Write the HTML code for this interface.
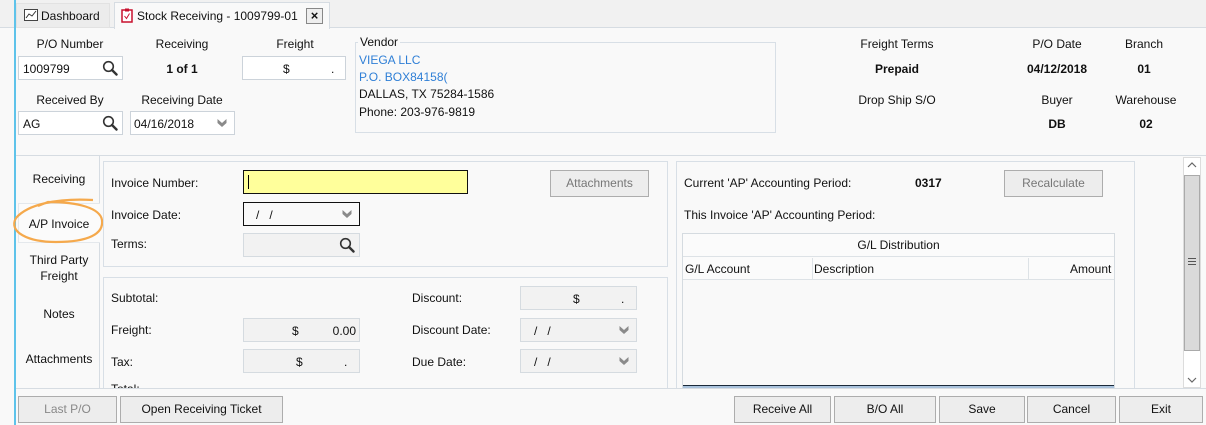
<!DOCTYPE html>
<html><head><meta charset="utf-8"><style>
*{box-sizing:border-box;margin:0;padding:0}
body{width:1206px;height:425px;overflow:hidden;background:#f9f9f9;font-family:"Liberation Sans",sans-serif;font-size:12px;color:#111;position:relative}
.a{position:absolute;white-space:nowrap}
.c{transform:translateX(-50%)}
.b{font-weight:bold}
.in{position:absolute;background:#fff;border:1px solid #ccd3da}
.gi{position:absolute;background:#f2f2f2;border:1px solid #d5dbe0}
.btn{position:absolute;background:#ededed;border:1px solid #adadad;text-align:center;line-height:25px}
.box{position:absolute;border:1px solid #d8dfe6}
.dd{position:absolute;right:7px;top:6px}
.mg{position:absolute;right:4px;top:3px}
</style></head><body>
<svg width="0" height="0" style="position:absolute"><defs>
<symbol id="mag" viewBox="0 0 16 16"><circle cx="6.5" cy="6.5" r="4.8" fill="none" stroke="#333" stroke-width="1.6"/><path d="M10 10 L14.5 14.5" stroke="#333" stroke-width="2.4" stroke-linecap="round"/></symbol>
<symbol id="chev" viewBox="0 0 10 10"><path d="M0.5 1 L5 5 L9.5 1 L9.5 5 L5 9 L0.5 5 Z" fill="#8a8a8a"/></symbol>
</defs></svg>
<div class="a" style="left:0;top:0;width:1206px;height:28px;background:#f1f1f1;border-bottom:1px solid #d6dce2"></div>
<div class="a" style="left:14px;top:0;width:2px;height:425px;background:#5ec3ea"></div>
<div class="a" style="left:16px;top:3px;width:94px;height:25px;background:#ececec;border:1px solid #e2e2e2"></div>
<svg class="a" style="left:24px;top:9px" width="14" height="12"><rect x="0.5" y="0.5" width="13" height="11" fill="#fff" stroke="#444"/><path d="M2 9 L5 5 L8 7 L12 2" stroke="#333" fill="none"/></svg>
<div class="a" style="left:41px;top:9px">Dashboard</div>
<div class="a" style="left:114px;top:2px;width:216px;height:27px;background:#f9f9f9;border:1px solid #d6dce2;border-bottom:none"></div>
<svg class="a" style="left:121px;top:8px" width="12" height="15"><rect x="1" y="2" width="10" height="12" fill="#fff" stroke="#c8102e" stroke-width="1.5"/><rect x="4" y="0.5" width="4" height="3" fill="#c8102e"/><path d="M3.5 8 L5.5 10.5 L8.5 5.5" stroke="#c8102e" fill="none"/></svg>
<div class="a" style="left:137px;top:9px">Stock Receiving - 1009799-01</div>
<div class="a" style="left:306px;top:8px;width:17px;height:16px;border:1px solid #888;background:#eee;text-align:center;font-weight:bold;line-height:14px;font-size:13px">×</div>

<div class="a c" style="left:70px;top:37px">P/O Number</div>
<div class="in" style="left:18px;top:56px;width:105px;height:24px"><span class="a" style="left:4px;top:5px">1009799</span><svg class="mg" width="16" height="16"><use href="#mag"/></svg></div>
<div class="a c" style="left:182px;top:37px">Receiving</div>
<div class="a c b" style="left:182px;top:62px">1 of 1</div>
<div class="a c" style="left:295px;top:37px">Freight</div>
<div class="in" style="left:242px;top:56px;width:104px;height:24px"><span class="a" style="left:40px;top:5px">$</span><span class="a" style="left:88px;top:5px">.</span></div>
<div class="a c" style="left:70px;top:93px">Received By</div>
<div class="in" style="left:18px;top:111px;width:105px;height:24px"><span class="a" style="left:4px;top:5px">AG</span><svg class="mg" width="16" height="16"><use href="#mag"/></svg></div>
<div class="a c" style="left:182px;top:93px">Receiving Date</div>
<div class="in" style="left:130px;top:111px;width:105px;height:24px"><span class="a" style="left:3px;top:5px">04/16/2018</span><svg class="dd" width="10" height="10"><use href="#chev"/></svg></div>

<div class="box" style="left:355px;top:42px;width:421px;height:91px"></div>
<div class="a" style="left:358px;top:35px;background:#f9f9f9;padding:0 2px">Vendor</div>
<div class="a" style="left:359px;top:53px;color:#2f7fd6">VIEGA LLC</div>
<div class="a" style="left:359px;top:70px;color:#2f7fd6">P.O. BOX84158(</div>
<div class="a" style="left:359px;top:87px">DALLAS, TX 75284-1586</div>
<div class="a" style="left:359px;top:105px">Phone: 203-976-9819</div>

<div class="a c" style="left:897px;top:37px">Freight Terms</div>
<div class="a c b" style="left:897px;top:62px">Prepaid</div>
<div class="a c" style="left:897px;top:93px">Drop Ship S/O</div>
<div class="a c" style="left:1057px;top:37px">P/O Date</div>
<div class="a c b" style="left:1057px;top:62px">04/12/2018</div>
<div class="a c" style="left:1057px;top:93px">Buyer</div>
<div class="a c b" style="left:1057px;top:117px">DB</div>
<div class="a c" style="left:1144px;top:37px">Branch</div>
<div class="a c b" style="left:1144px;top:62px">01</div>
<div class="a c" style="left:1146px;top:93px">Warehouse</div>
<div class="a c b" style="left:1146px;top:117px">02</div>

<div class="a" style="left:16px;top:155px;width:1190px;height:1px;background:#d6dce2"></div>
<div class="a" style="left:99px;top:155px;width:1px;height:233px;background:#d6dce2"></div>
<div class="a" style="left:16px;top:388px;width:1190px;height:1px;background:#d6dce2"></div>

<div class="a c" style="left:59px;top:172px">Receiving</div>
<div class="a" style="left:18px;top:203px;width:82px;height:40px;background:#fbfbfb;border:1px solid #e4e8ec;border-right:none"></div>
<div class="a c" style="left:59px;top:217px">A/P Invoice</div>
<svg class="a" style="left:8px;top:190px" width="100" height="62"><path d="M85 10 C50 8 20 14 8 28 C0 42 20 52 48 52 C80 52 96 44 94 30 C92 18 70 12 40 12 L30 16" fill="none" stroke="#f5a94c" stroke-width="2.2"/></svg>
<div class="a c" style="left:59px;top:253px">Third Party</div>
<div class="a c" style="left:59px;top:269px">Freight</div>
<div class="a c" style="left:59px;top:307px">Notes</div>
<div class="a c" style="left:59px;top:352px">Attachments</div>

<div class="box" style="left:103px;top:161px;width:565px;height:106px"></div>
<div class="box" style="left:103px;top:277px;width:565px;height:111px;border-bottom:none"></div>
<div class="a" style="left:111px;top:176px">Invoice Number:</div>
<div class="a" style="left:243px;top:170px;width:225px;height:24px;background:#ffff9b;border:1px solid #111"><span class="a" style="left:4px;top:4px;width:1px;height:14px;background:#000"></span></div>
<div class="btn" style="left:550px;top:170px;width:99px;height:27px;color:#777">Attachments</div>
<div class="a" style="left:111px;top:208px">Invoice Date:</div>
<div class="a" style="left:243px;top:202px;width:117px;height:24px;background:#f9f9f9;border:1px solid #111"><span class="a" style="left:12px;top:5px">/&nbsp;&nbsp;&nbsp;/</span><svg class="dd" width="10" height="10"><use href="#chev"/></svg></div>
<div class="a" style="left:111px;top:237px">Terms:</div>
<div class="gi" style="left:243px;top:233px;width:117px;height:24px"><svg class="mg" width="16" height="16"><use href="#mag"/></svg></div>

<div class="a" style="left:111px;top:291px">Subtotal:</div>
<div class="a" style="left:111px;top:323px">Freight:</div>
<div class="gi" style="left:243px;top:318px;width:117px;height:24px"><span class="a" style="left:48px;top:5px">$</span><span class="a" style="right:3px;top:5px">0.00</span></div>
<div class="a" style="left:111px;top:355px">Tax:</div>
<div class="gi" style="left:243px;top:349px;width:117px;height:24px"><span class="a" style="left:52px;top:5px">$</span><span class="a" style="left:100px;top:5px">.</span></div>
<div class="a" style="left:111px;top:382px;height:6px;overflow:hidden">Total:</div>
<div class="a" style="left:412px;top:291px">Discount:</div>
<div class="gi" style="left:520px;top:286px;width:117px;height:24px"><span class="a" style="left:52px;top:5px">$</span><span class="a" style="left:100px;top:5px">.</span></div>
<div class="a" style="left:412px;top:323px">Discount Date:</div>
<div class="gi" style="left:520px;top:318px;width:117px;height:24px"><span class="a" style="left:13px;top:5px">/&nbsp;&nbsp;&nbsp;/</span><svg class="dd" width="10" height="10"><use href="#chev"/></svg></div>
<div class="a" style="left:412px;top:355px">Due Date:</div>
<div class="gi" style="left:520px;top:349px;width:117px;height:24px"><span class="a" style="left:13px;top:5px">/&nbsp;&nbsp;&nbsp;/</span><svg class="dd" width="10" height="10"><use href="#chev"/></svg></div>

<div class="box" style="left:676px;top:161px;width:459px;height:227px;border-bottom:none"></div>
<div class="a" style="left:684px;top:176px">Current 'AP' Accounting Period:</div>
<div class="a b" style="left:915px;top:176px">0317</div>
<div class="btn" style="left:1004px;top:170px;width:99px;height:27px;color:#777">Recalculate</div>
<div class="a" style="left:684px;top:208px">This Invoice 'AP' Accounting Period:</div>
<div class="a" style="left:682px;top:233px;width:433px;height:155px;border:1px solid #d5dbe0;background:#f9f9f9"></div>
<div class="a" style="left:683px;top:234px;width:431px;height:23px;background:#fbfbfb;border-bottom:1px solid #dde2e6;text-align:center;line-height:23px">G/L Distribution</div>
<div class="a" style="left:683px;top:257px;width:431px;height:23px;background:#fbfbfb;border-bottom:1px solid #dde2e6"></div>
<div class="a" style="left:812px;top:258px;width:1px;height:21px;background:#dde2e6"></div>
<div class="a" style="left:1028px;top:258px;width:1px;height:21px;background:#dde2e6"></div>
<div class="a" style="left:685px;top:262px">G/L Account</div>
<div class="a" style="left:814px;top:262px">Description</div>
<div class="a" style="left:1070px;top:262px">Amount</div>
<div class="a" style="left:683px;top:385px;width:431px;height:3px;background:#1b2a3a"></div>
<div class="a" style="left:683px;top:386px;width:431px;height:2px;background:#a9c2dc"></div>

<div class="a" style="left:1183px;top:157px;width:18px;height:231px;background:#fff;border:1px solid #dcdcdc"></div>
<svg class="a" style="left:1187px;top:161px" width="10" height="8"><path d="M1 6 L5 2 L9 6" fill="none" stroke="#666" stroke-width="1.2"/></svg>
<div class="a" style="left:1184px;top:175px;width:16px;height:176px;background:#dadada;border:1px solid #aaa"></div>
<div class="a" style="left:1188px;top:258px;width:8px;height:1px;background:#555;box-shadow:0 3px #555,0 6px #555"></div>
<svg class="a" style="left:1187px;top:376px" width="10" height="8"><path d="M1 2 L5 6 L9 2" fill="none" stroke="#666" stroke-width="1.2"/></svg>

<div class="btn" style="left:18px;top:396px;width:99px;height:27px;color:#888">Last P/O</div>
<div class="btn" style="left:120px;top:396px;width:163px;height:27px">Open Receiving Ticket</div>
<div class="btn" style="left:734px;top:396px;width:97px;height:27px">Receive All</div>
<div class="btn" style="left:834px;top:396px;width:102px;height:27px">B/O All</div>
<div class="btn" style="left:939px;top:396px;width:86px;height:27px">Save</div>
<div class="btn" style="left:1027px;top:396px;width:89px;height:27px">Cancel</div>
<div class="btn" style="left:1119px;top:396px;width:84px;height:27px">Exit</div>
</body></html>
